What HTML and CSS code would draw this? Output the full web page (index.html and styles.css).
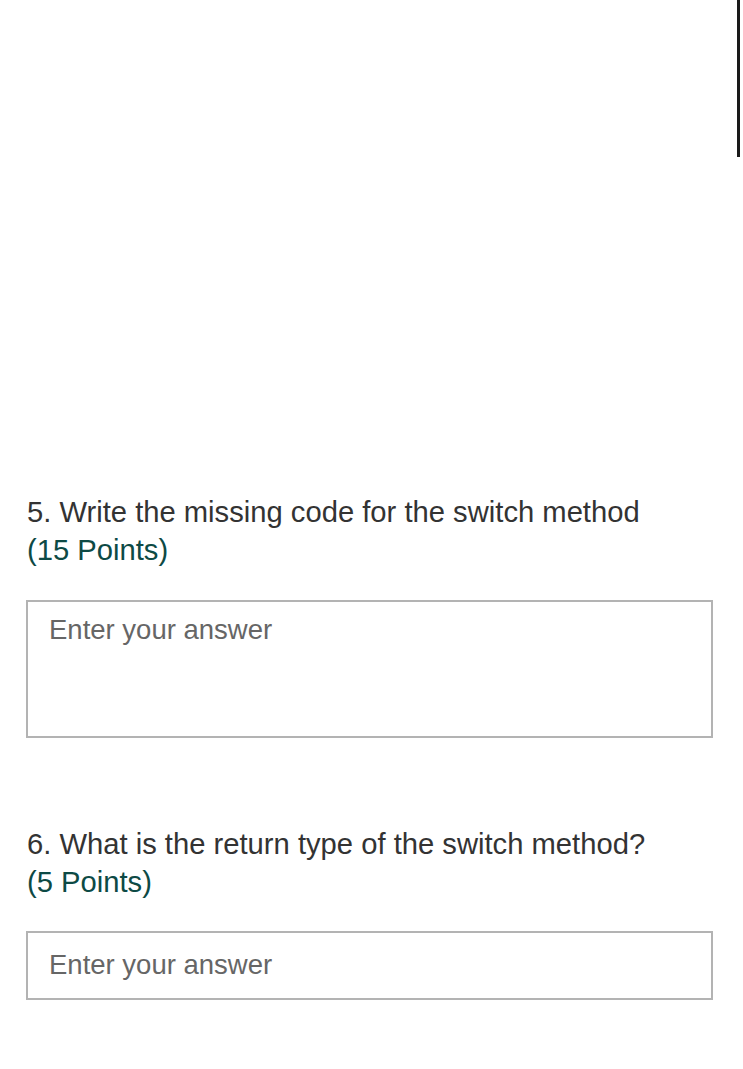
FILE: index.html
```html
<!DOCTYPE html>
<html lang="en">
<head>
    <meta charset="UTF-8">
    <meta name="viewport" content="width=device-width, initial-scale=1.0">
    <title>Quiz</title>
    <link rel="stylesheet" href="styles.css">
</head>
<body>
    <div class="scrollbar"></div>
    <div class="form">
        <div class="question q5">
            <div class="title">
                <span class="text">5. Write the missing code for the switch method</span>
                <span class="points">(15 Points)</span>
            </div>
            <div class="answer long">Enter your answer</div>
        </div>
        <div class="question q6">
            <div class="title">
                <span class="text">6. What is the return type of the switch method?</span>
                <span class="points">(5 Points)</span>
            </div>
            <div class="answer short">Enter your answer</div>
        </div>
    </div>
</body>
</html>
```

FILE: styles.css
```css
body {
    font-family: "Liberation Sans", Arial, sans-serif;
    background-color: #fff;
    color: #333;
    margin: 0;
    padding: 0;
}
.scrollbar {
    position: absolute;
    top: 0;
    left: 737px;
    width: 3px;
    height: 157px;
    background-color: #1a1a1a;
}
.form {
    padding: 493px 30px 0 26px;
}
.question {
    display: flex;
    flex-direction: column;
}
.q6 {
    margin-top: 87px;
}
.title {
    display: flex;
    flex-direction: column;
    font-size: 29.2px;
    line-height: 38px;
    padding-left: 1px;
}
.points {
    color: #0d4a45;
}
.answer {
    box-sizing: border-box;
    border: 2px solid #b3b3b3;
    color: #666;
    font-size: 27.5px;
    line-height: 32px;
    padding: 12px 21px 0;
    margin-top: 31px;
}
.answer.long {
    height: 138px;
}
.answer.short {
    margin-top: 30px;
    height: 69px;
    padding-top: 16px;
}
```
